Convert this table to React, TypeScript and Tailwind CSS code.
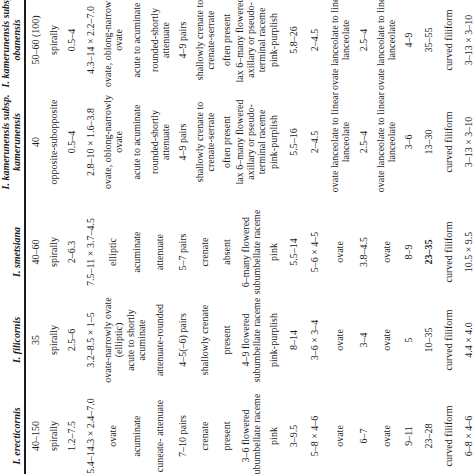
const heads = [
  "I. erecticornis",
  "I. filicornis",
  "I. smetsiana",
  "I. kamerunensis subsp.\nkamerunensis",
  "I. kamerunensis subsp.\nobanensis",
];

const rows: string[][] = [
  ["40–150", "35", "40–60", "40", "50–60 (100)"],
  ["spirally", "spirally", "spirally", "opposite-subopposite", "spirally"],
  ["1.2–7.5", "2.5–6", "2–6.3", "0.5–4", "0.5–4"],
  ["5.4–14.3 × 2.4–7.0", "3.2–8.5 × 1–5", "7.5–11 × 3.7–4.5", "2.8–10 × 1.6–3.8", "4.3–14 × 2.2–7.0"],
  ["ovate", "ovate-narrowly ovate\n(elliptic)", "elliptic", "ovate, oblong-narrowly\novate", "ovate, oblong-narrowly\novate"],
  ["acuminate", "acute to shortly\nacuminate", "acuminate", "acute to acuminate", "acute to acuminate"],
  ["cuneate- attenuate", "attenuate-rounded", "attenuate", "rounded-shortly\nattenuate", "rounded-shortly\nattenuate"],
  ["7–10 pairs", "4–5(–6) pairs", "5–7 pairs", "4–9 pairs", "4–9 pairs"],
  ["crenate", "shallowly crenate", "crenate", "shallowly crenate to\ncrenate-serrate", "shallowly crenate to\ncrenate-serrate"],
  ["present", "present", "absent", "often present", "often present"],
  [
    "3–6 flowered\nsubumbellate raceme",
    "4–9 flowered\nsubumbellate raceme",
    "6–many flowered\nsubumbellate raceme",
    "lax 6–many flowered\naxillary or pseudo-\nterminal raceme",
    "lax 6–many flowered\naxillary or pseudo-\nterminal raceme",
  ],
  ["pink", "pink-purplish", "pink", "pink-purplish", "pink-purplish"],
  ["3–9.5", "8–14", "5.5–14", "5.5–16", "5.8–26"],
  ["5–8 × 4–6", "3–6 × 3–4", "5–6 × 4–5", "2–4.5", "2–4.5"],
  ["ovate", "ovate", "ovate", "ovate lanceolate to linear\nlanceolate", "ovate lanceolate to linear\nlanceolate"],
  ["6–7", "3–4", "3.8–4.5", "2.5–4", "2.5–4"],
  ["ovate", "ovate", "ovate", "ovate lanceolate to linear\nlanceolate", "ovate lanceolate to linear\nlanceolate"],
  ["9–11", "5", "8–9", "3–6", "4–9"],
  ["23–28", "10–35", "23–35", "13–30", "35–55"],
  ["curved filiform", "curved filiform", "curved filiform", "curved filiform", "curved filiform"],
  ["6–8 × 4–6", "4.4 × 4.0", "10.5 × 9.5", "3–13 × 3–10", "3–13 × 3–10"],
];

// the one value printed in bold in the scan
const bold = "18-2";

// the scanned table runs off both edges of the page, hence the negative margin
const cols = "grid grid-cols-[116px_76px_100px_120px_84px] -ml-[20px] w-[496px]";

export default function App() {
  return (
    <div className="h-[474px] w-[474px] overflow-hidden bg-white">
      <div
        className="h-[474px] w-[474px] -rotate-90 text-[10px] leading-[11px] text-[#1c1c1c]"
        style={{ fontFamily: '"Liberation Serif", "Times New Roman", serif' }}
      >
        <div className={`${cols} h-[24px] items-end pb-[2px]`}>
          {heads.map((h) => (
            <div key={h} className="w-max justify-self-center whitespace-pre-line text-center font-bold italic">
              {h}
            </div>
          ))}
        </div>
        <div className="h-[2px] w-full bg-[#1c1c1c]" />
        <div
          className={`${cols} items-center grid-rows-[19px_17px_18px_21px_23px_24px_23px_23px_21px_23px_25px_21px_18px_25px_25px_22px_24px_20px_20px_20px_20px]`}
        >
          {rows.map((r, i) =>
            r.map((v, j) => (
              <div
                key={`${i}-${j}`}
                className={`w-max justify-self-center whitespace-pre-line text-center ${
                  `${i}-${j}` === bold ? "font-bold" : ""
                }`}
              >
                {v}
              </div>
            )),
          )}
        </div>
      </div>
    </div>
  );
}
